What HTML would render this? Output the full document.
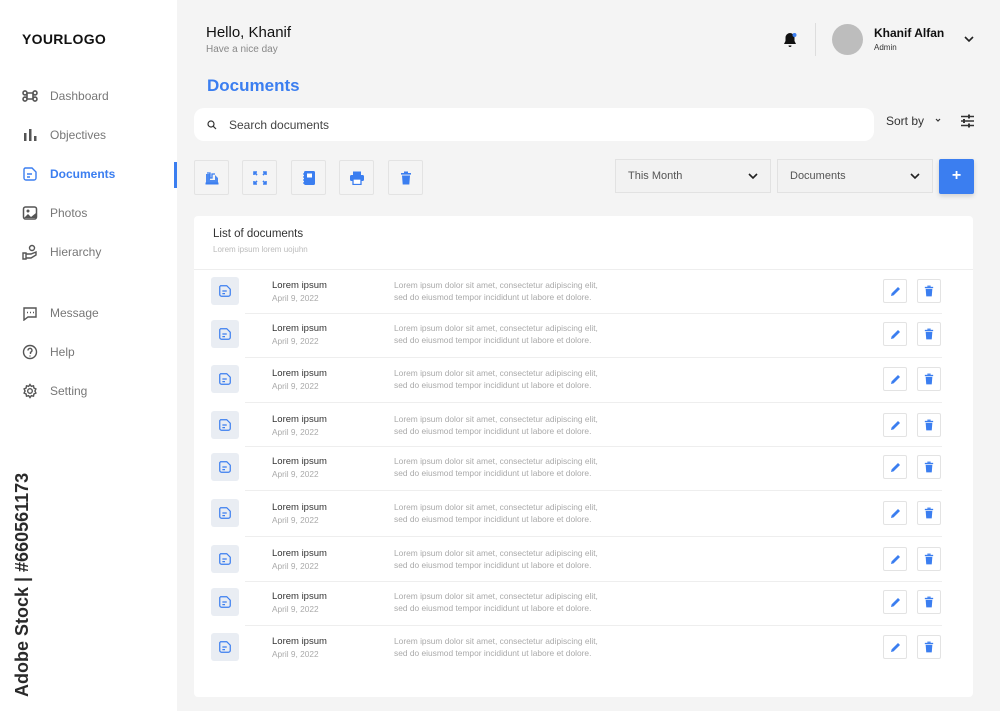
<!DOCTYPE html>
<html><head><meta charset="utf-8"><style>
*{margin:0;padding:0;box-sizing:border-box}
body{width:1000px;height:711px;overflow:hidden;background:#f4f4f4;font-family:"Liberation Sans",sans-serif;position:relative;color:#222}
.a{position:absolute}
.side{left:0;top:0;width:177px;height:711px;background:#fff}
.nav{left:22px;font-size:12px;color:#777;display:flex;align-items:center}
.nav svg{width:16px;height:16px;margin-right:12px}
.tb{width:35px;height:35px;border:1px solid #e3e3e3;border-radius:2px;display:flex;align-items:center;justify-content:center}
.row{left:194px;width:779px;height:1px;background:#eee}
.ic{left:211px;width:28px;height:28px;background:#e9edf3;border-radius:3px;display:flex;align-items:center;justify-content:center}
.t1{left:272px;font-size:9.5px;color:#333}
.t2{left:272px;font-size:8.3px;color:#aaa}
.d{left:394px;font-size:8.4px;color:#aaa;line-height:12px}
.bt{width:24px;height:24px;border:1px solid #e3e3e3;border-radius:2px;display:flex;align-items:center;justify-content:center;background:#fff}
.sel{height:34px;border:1px solid #e2e2e2;background:#f2f2f2;font-size:11px;color:#555;display:flex;align-items:center;justify-content:space-between;padding:0 12px}
</style></head><body>
<div class="a side"></div>
<div class="a" style="left:22px;top:31px;font-size:14px;font-weight:bold;color:#111;letter-spacing:.3px">YOURLOGO</div>

<div class="a nav" style="top:88px"><svg viewBox="0 0 16 16" fill="none" stroke="#555" stroke-width="1.6"><path d="M5 5h6v6H5z M5 5a2 2 0 1 1 0-.1M11 5a2 2 0 1 0 0-.1M5 11a2 2 0 1 0 0 .1M11 11a2 2 0 1 1 0 .1"/></svg>Dashboard</div>
<div class="a nav" style="top:127px"><svg viewBox="0 0 16 16" fill="#555"><rect x="2" y="6" width="2.5" height="8"/><rect x="7" y="2" width="2.5" height="12"/><rect x="12" y="9" width="2.5" height="5"/></svg>Objectives</div>
<div class="a nav" style="top:166px;color:#3b7ef0;font-weight:bold"><svg viewBox="0 0 16 16" fill="none" stroke="#3b7ef0" stroke-width="1.4"><path d="M3 2h7l4 4v6a2 2 0 0 1-2 2H4a2 2 0 0 1-2-2V3zM5 8h5M5 11h3"/></svg>Documents</div>
<div class="a" style="left:174px;top:162px;width:3px;height:26px;background:#3b7ef0"></div>
<div class="a nav" style="top:205px"><svg viewBox="0 0 16 16"><rect x="1.5" y="2" width="13" height="12" rx="2" fill="none" stroke="#555" stroke-width="1.5"/><path d="M2 13l4-4 3 3 5-4v5H2z" fill="#555"/><circle cx="6" cy="6" r="1.5" fill="#555"/></svg>Photos</div>
<div class="a nav" style="top:244px"><svg viewBox="0 0 16 16" fill="none" stroke="#555" stroke-width="1.4"><circle cx="10" cy="4" r="2.5"/><path d="M1 9h3v6H1zM4 10h5l5-2v3l-5 3H4"/></svg>Hierarchy</div>
<div class="a nav" style="top:305px"><svg viewBox="0 0 16 16" fill="none" stroke="#555" stroke-width="1.4"><path d="M2 3h12v9H6l-4 3z"/><path d="M5 7.5h1M8 7.5h1M11 7.5h1"/></svg>Message</div>
<div class="a nav" style="top:344px"><svg viewBox="0 0 16 16" fill="none" stroke="#555" stroke-width="1.4"><circle cx="8" cy="8" r="6.5"/><path d="M6 6.5a2 2 0 1 1 2.5 1.8V10M8 11.5v1"/></svg>Help</div>
<div class="a nav" style="top:383px"><svg viewBox="0 0 16 16" fill="none" stroke="#555" stroke-width="1.4"><circle cx="8" cy="8" r="2.3"/><path d="M8 1.5l1.3 1.8 2.2-.5.4 2.2 2 1-1 2 1 2-2 1-.4 2.2-2.2-.5L8 14.5l-1.3-1.8-2.2.5-.4-2.2-2-1 1-2-1-2 2-1 .4-2.2 2.2.5z"/></svg>Setting</div>

<div class="a" style="left:12px;top:697px;transform:rotate(-90deg);transform-origin:0 0;font-size:18px;font-weight:bold;color:#2a2a2a;white-space:nowrap;width:220px">Adobe Stock | #660561173</div>

<div class="a" style="left:206px;top:24px;font-size:15px;color:#111">Hello, Khanif</div>
<div class="a" style="left:206px;top:44px;font-size:10px;color:#888">Have a nice day</div>
<div class="a" style="left:207px;top:76px;font-size:17px;font-weight:bold;color:#3b7ef0">Documents</div>

<svg class="a" style="left:782px;top:32px" width="16" height="16" viewBox="0 0 16 16"><path d="M8 1a4.5 4.5 0 0 0-4.5 4.5V9L2 12h12l-1.5-3V5.5A4.5 4.5 0 0 0 8 1zM6.5 13.5h3a1.5 1.5 0 0 1-3 0z" fill="#111"/><circle cx="12.5" cy="3" r="2" fill="#3b7ef0"/></svg>
<div class="a" style="left:815px;top:23px;width:1px;height:33px;background:#ddd"></div>
<div class="a" style="left:832px;top:24px;width:31px;height:31px;border-radius:50%;background:#bdbdbd"></div>
<div class="a" style="left:874px;top:26px;font-size:12px;font-weight:bold;color:#111">Khanif Alfan</div>
<div class="a" style="left:874px;top:43px;font-size:8px;color:#333">Admin</div>
<svg class="a" style="left:964px;top:35px" width="10" height="8" viewBox="0 0 10 8"><path d="M1 2l4 4 4-4" fill="none" stroke="#222" stroke-width="1.6"/></svg>

<div class="a" style="left:194px;top:108px;width:680px;height:33px;background:#fff;border-radius:10px"></div>
<svg class="a" style="left:207px;top:120px" width="10" height="10" viewBox="0 0 10 10"><circle cx="4" cy="4" r="3" fill="none" stroke="#333" stroke-width="1.2"/><path d="M6.3 6.3L9 9" stroke="#333" stroke-width="1.2"/></svg>
<div class="a" style="left:229px;top:118px;font-size:12px;color:#444">Search documents</div>
<div class="a" style="left:886px;top:114px;font-size:12px;color:#333">Sort by</div>
<svg class="a" style="left:935px;top:118px" width="6" height="5"><path d="M1 1l2 2 2-2" fill="none" stroke="#333" stroke-width="1.2"/></svg>
<svg class="a" style="left:960px;top:114px" width="15" height="14" viewBox="0 0 15 14" stroke="#333" stroke-width="1.4"><path d="M1 2.5h13M1 7h13M1 11.5h13"/><path d="M9 0.5v4M4 5v4M9 9.5v4" stroke-width="2"/></svg>

<div class="a tb" style="left:194px;top:160px"><svg width="16" height="16" viewBox="0 0 16 16" fill="#3b7ef0"><path d="M2 4h4v6h5V5l3 3v5H2z" opacity=".9"/><path d="M3 3h3v5h2V4h3" fill="none" stroke="#3b7ef0" stroke-width="1.3"/><rect x="1.5" y="12.5" width="13" height="2"/></svg></div>
<div class="a tb" style="left:242px;top:160px"><svg width="14" height="14" viewBox="0 0 14 14" fill="none" stroke="#3b7ef0" stroke-width="1.6"><path d="M1 4V1h3M1 1l3 3M13 4V1h-3M13 1l-3 3M1 10v3h3M1 13l3-3M13 10v3h-3M13 13l-3-3"/></svg></div>
<div class="a tb" style="left:291px;top:160px"><svg width="14" height="16" viewBox="0 0 14 16"><rect x="2" y="1" width="11" height="14" rx="1.5" fill="#3b7ef0"/><rect x="5" y="3.5" width="5" height="4" fill="#fff"/><path d="M1 4h2M1 7h2M1 10h2M1 13h2" stroke="#3b7ef0" stroke-width="1.2"/></svg></div>
<div class="a tb" style="left:339px;top:160px"><svg width="16" height="14" viewBox="0 0 16 14" fill="#3b7ef0"><rect x="4" y="0.5" width="8" height="3.5"/><rect x="1" y="4" width="14" height="6" rx="1.5"/><rect x="4" y="8" width="8" height="5.5" fill="#fff" stroke="#3b7ef0" stroke-width="1.3"/></svg></div>
<div class="a tb" style="left:388px;top:160px"><svg width="12" height="14" viewBox="0 0 12 14" fill="#3b7ef0"><rect x="1" y="2" width="10" height="1.6"/><rect x="4" y="0.5" width="4" height="1.5"/><path d="M2 4.5h8l-.7 9H2.7z"/></svg></div>

<div class="a sel" style="left:615px;top:159px;width:156px">This Month<svg width="10" height="7"><path d="M1 1l4 4 4-4" fill="none" stroke="#222" stroke-width="1.6"/></svg></div>
<div class="a sel" style="left:777px;top:159px;width:156px">Documents<svg width="10" height="7"><path d="M1 1l4 4 4-4" fill="none" stroke="#222" stroke-width="1.6"/></svg></div>
<div class="a" style="left:939px;top:159px;width:35px;height:35px;background:#3b7ef0;border-radius:2px;box-shadow:0 2px 5px rgba(0,0,0,.15);color:#fff;font-size:16px;font-weight:bold;text-align:center;line-height:34px">+</div>

<div class="a" style="left:194px;top:216px;width:779px;height:481px;background:#fff;border-radius:4px"></div>
<div class="a" style="left:213px;top:228px;font-size:11.5px;color:#333">List of documents</div>
<div class="a" style="left:213px;top:245px;font-size:8px;color:#bbb">Lorem ipsum lorem uojuhn</div>
<div class="a row" style="top:269px"></div>

<div id="rows"></div>
<script>
var ys=[291,334,379,425,467,513,559,602,647],h='';
var doc='<svg width="14" height="14" viewBox="0 0 16 16" fill="none" stroke="#3b7ef0" stroke-width="1.4"><path d="M3 2h7l4 4v6a2 2 0 0 1-2 2H4a2 2 0 0 1-2-2V3zM5 8h5M5 11h3"/></svg>';
var pen='<svg width="11" height="11" viewBox="0 0 11 11" fill="#3b7ef0"><path d="M1 10l.6-2.6L8 1l2 2-6.4 6.4z"/></svg>';
var tr='<svg width="10" height="12" viewBox="0 0 12 14" fill="#3b7ef0"><rect x="1" y="2" width="10" height="1.6"/><rect x="4" y="0.5" width="4" height="1.5"/><path d="M2 4.5h8l-.7 9H2.7z"/></svg>';
ys.forEach(function(y,i){
h+='<div class="a ic" style="top:'+(y-14)+'px">'+doc+'</div>';
h+='<div class="a t1" style="top:'+(y-11)+'px">Lorem ipsum</div>';
h+='<div class="a t2" style="top:'+(y+2)+'px">April 9, 2022</div>';
h+='<div class="a d" style="top:'+(y-12)+'px">Lorem ipsum dolor sit amet, consectetur adipiscing elit,<br>sed do eiusmod tempor incididunt ut labore et dolore.</div>';
h+='<div class="a bt" style="left:883px;top:'+(y-12)+'px">'+pen+'</div>';
h+='<div class="a bt" style="left:917px;top:'+(y-12)+'px">'+tr+'</div>';
if(i<8)h+='<div class="a row" style="left:245px;width:697px;top:'+Math.round((y+ys[i+1])/2)+'px"></div>';
});
document.getElementById('rows').innerHTML=h;
</script>
</body></html>
